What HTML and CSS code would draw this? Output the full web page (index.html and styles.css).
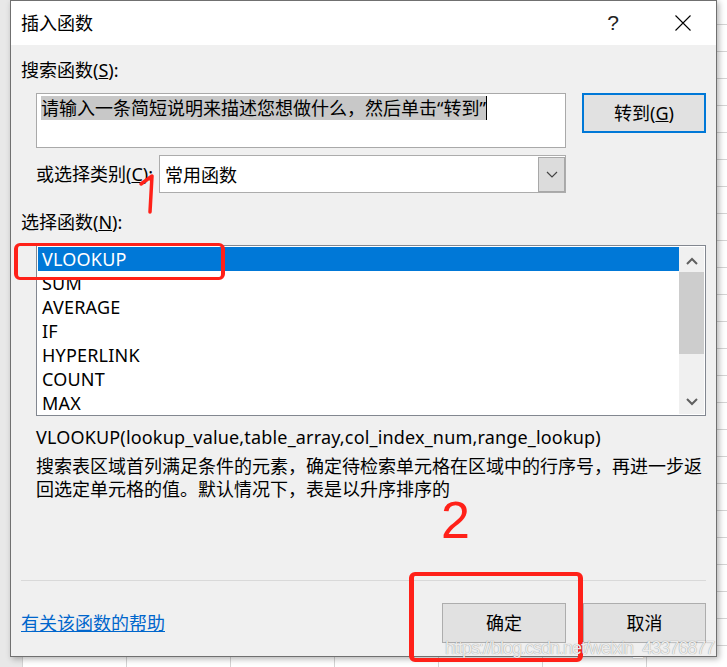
FILE: index.html
```html
<!DOCTYPE html>
<html lang="zh-CN">
<head>
<meta charset="utf-8">
<title>插入函数</title>
<link rel="stylesheet" href="styles.css">
</head>
<body>
<div class="dialog">
  <div class="titlebar">
    <span class="title">插入函数</span>
    <span class="help">?</span>
    <svg class="close" width="16" height="16" viewBox="0 0 16 16"><path d="M0.5 0.5 L15.5 15.5 M15.5 0.5 L0.5 15.5" stroke="#000" stroke-width="1.1" fill="none"/></svg>
  </div>
  <div class="content">
    <div class="label">搜索函数(<u>S</u>):</div>
    <div class="search-row">
      <div class="search-box"><span class="sel">请输入一条简短说明来描述您想做什么，然后单击“转到”</span><span class="caret"></span></div>
      <button class="btn btn-go">转到(<u>G</u>)</button>
    </div>
    <div class="cat-row">
      <span class="cat-label">或选择类别(<u>C</u>):</span>
      <div class="combo">
        <span class="combo-text">常用函数</span>
        <span class="combo-btn"><svg width="12" height="7" viewBox="0 0 12 7"><path d="M1 1 L6 6 L11 1" stroke="#444" stroke-width="1.2" fill="none"/></svg></span>
      </div>
    </div>
    <div class="label label-fn">选择函数(<u>N</u>):</div>
    <div class="listbox">
      <ul class="items">
        <li class="selected">VLOOKUP</li>
        <li>SUM</li>
        <li>AVERAGE</li>
        <li>IF</li>
        <li>HYPERLINK</li>
        <li>COUNT</li>
        <li>MAX</li>
      </ul>
      <div class="scrollbar">
        <span class="arrow up"><svg width="12" height="8" viewBox="0 0 12 8"><path d="M1 7 L6 2 L11 7" stroke="#606060" stroke-width="2" fill="none"/></svg></span>
        <span class="thumb"></span>
        <span class="track"></span>
        <span class="arrow down"><svg width="12" height="8" viewBox="0 0 12 8"><path d="M1 1 L6 6 L11 1" stroke="#606060" stroke-width="2" fill="none"/></svg></span>
      </div>
    </div>
    <div class="syntax">VLOOKUP(lookup_value,table_array,col_index_num,range_lookup)</div>
    <div class="desc">搜索表区域首列满足条件的元素，确定待检索单元格在区域中的行序号，再进一步返回选定单元格的值。默认情况下，表是以升序排序的</div>
    <div class="footer">
      <a class="help-link">有关该函数的帮助</a>
      <div class="buttons">
        <button class="btn btn-ok">确定</button>
        <button class="btn btn-cancel">取消</button>
      </div>
    </div>
  </div>
</div>
<div class="anno rect1"></div>
<div class="anno rect2"></div>
<svg class="anno one" width="20" height="44" viewBox="0 0 20 44"><path d="M3 12 L14 4 L12 40" stroke="#ff2119" stroke-width="3.5" stroke-linecap="round" stroke-linejoin="round" fill="none"/></svg>
<span class="anno two">2</span>
<span class="anno watermark">https://blog.csdn.net/weixin_43376877</span>
</body>
</html>
```

FILE: styles.css
```css
* { box-sizing: border-box; }
html, body { margin: 0; padding: 0; }
body {
  width: 727px;
  height: 667px;
  overflow: hidden;
  position: relative;
  font-family: "Noto Sans", "Noto Sans CJK SC", sans-serif;
  font-size: 18px;
  color: #000;
  background-color: #fff;
  background-image:
    linear-gradient(to right, #e8e8e8 22px, transparent 22px),
    linear-gradient(to right, #d4d4d4 1px, transparent 1px),
    linear-gradient(to bottom, #d4d4d4 1px, transparent 1px);
  background-size: 100% 100%, 104px 100%, 100% 27px;
  background-position: 0 0, 22px 0, 0 24px;
  background-repeat: no-repeat, repeat, repeat;
}
.dialog {
  margin-left: 10px;
  width: 707px;
  height: 657px;
  border: 1px solid #707070;
  background: #f0f0f0;
  box-shadow: 2px 2px 6px rgba(0, 0, 0, 0.3);
  display: flex;
  flex-direction: column;
}
.titlebar {
  height: 44px;
  flex: none;
  background: #fff;
  display: flex;
  align-items: center;
  padding-left: 10px;
}
.title { flex: 1; line-height: 24px; }
.help {
  width: 16px;
  text-align: center;
  font-family: "Liberation Sans", sans-serif;
  font-size: 21px;
  line-height: 24px;
  color: #222;
  margin-right: 54px;
}
.close { display: block; margin-right: 25px; }
.content {
  flex: 1;
  display: flex;
  flex-direction: column;
  padding: 0 10px;
}
.label { margin-top: 13px; line-height: 24px; }
.search-row {
  margin-top: 11px;
  display: flex;
  align-items: flex-start;
  padding-left: 15px;
}
.search-box {
  width: 530px;
  height: 55px;
  border: 1px solid #a9a9a9;
  background: #fff;
  padding: 2px 0 0 4px;
  line-height: 24px;
}
.sel { background: #c8c8c8; }
.caret {
  display: inline-block;
  width: 1px;
  height: 24px;
  background: #000;
  vertical-align: top;
}
.btn {
  font: inherit;
  line-height: 24px;
  color: #000;
  background: #e1e1e1;
  border: 1px solid #adadad;
  padding: 0;
  margin: 0;
  height: 40px;
}
.btn-go {
  margin-left: auto;
  width: 124px;
  border: 2px solid #0078d7;
}
.cat-row {
  margin-top: 7px;
  display: flex;
  align-items: center;
  padding-left: 15px;
}
.cat-label { width: 123px; line-height: 24px; }
.combo {
  width: 407px;
  height: 38px;
  border: 1px solid #acacac;
  background: #fff;
  display: flex;
  align-items: center;
  padding: 1px 0 0 0;
}
.combo-text { flex: 1; padding-left: 5px; line-height: 24px; }
.combo-btn {
  width: 27px;
  height: 35px;
  border: 1px solid #a8a8a8;
  background: #dcdcdc;
  display: flex;
  align-items: center;
  justify-content: center;
}
.label-fn { margin-top: 17px; }
.listbox {
  margin-top: 11px;
  margin-left: 15px;
  width: 670px;
  height: 171px;
  flex: none;
  border: 1px solid #828790;
  background: #fff;
  padding: 1px;
  display: flex;
  overflow: hidden;
}
.items { list-style: none; margin: 0; padding: 0; flex: 1; }
.items li { height: 24px; line-height: 24px; padding-left: 4px; letter-spacing: 0.2px; }
.items li.selected { background: #0078d7; color: #fff; }
.scrollbar {
  width: 25px;
  background: #f0f0f0;
  display: flex;
  flex-direction: column;
}
.arrow { display: flex; justify-content: center; }
.arrow.up { height: 25px; padding-top: 10px; }
.arrow.down { height: 24px; padding-top: 8px; }
.thumb { height: 82px; background: #cdcdcd; }
.track { flex: 1; }
.syntax { margin-top: 9px; padding-left: 15px; line-height: 24px; letter-spacing: 0.17px; }
.desc { margin-top: 6px; padding-left: 15px; line-height: 23px; }
.footer {
  margin-top: auto;
  border-top: 1px solid #d9d9d9;
  padding: 22px 0 13px;
  display: flex;
  align-items: center;
}
.help-link {
  flex: 1;
  color: #0066cc;
  text-decoration: underline;
  line-height: 24px;
}
.buttons { display: flex; gap: 17px; }
.btn-ok { width: 124px; }
.btn-cancel { width: 123px; }

.anno { position: absolute; }
.rect1 {
  left: 14px; top: 243px; width: 211px; height: 37px;
  border: 3px solid #ff2119;
  border-left-width: 4px; border-right-width: 4px;
  border-radius: 6px;
}
.rect2 {
  left: 409px; top: 572px; width: 174px; height: 90px;
  border: 4px solid #ff2119;
  border-left-width: 5px; border-right-width: 5px;
  border-radius: 6px;
}
.one { left: 138px; top: 172px; }
.two {
  left: 441px; top: 502px;
  font-family: "Liberation Sans", sans-serif;
  font-size: 52px;
  line-height: 36px;
  color: #ff2119;
}
.watermark {
  left: 445px; top: 638px;
  font-family: "Liberation Sans", sans-serif;
  font-size: 18px;
  line-height: 20px;
  letter-spacing: -1px;
  color: #ececec;
  text-shadow: 0 0 1px rgba(0, 0, 0, 0.45);
  white-space: nowrap;
}
```
